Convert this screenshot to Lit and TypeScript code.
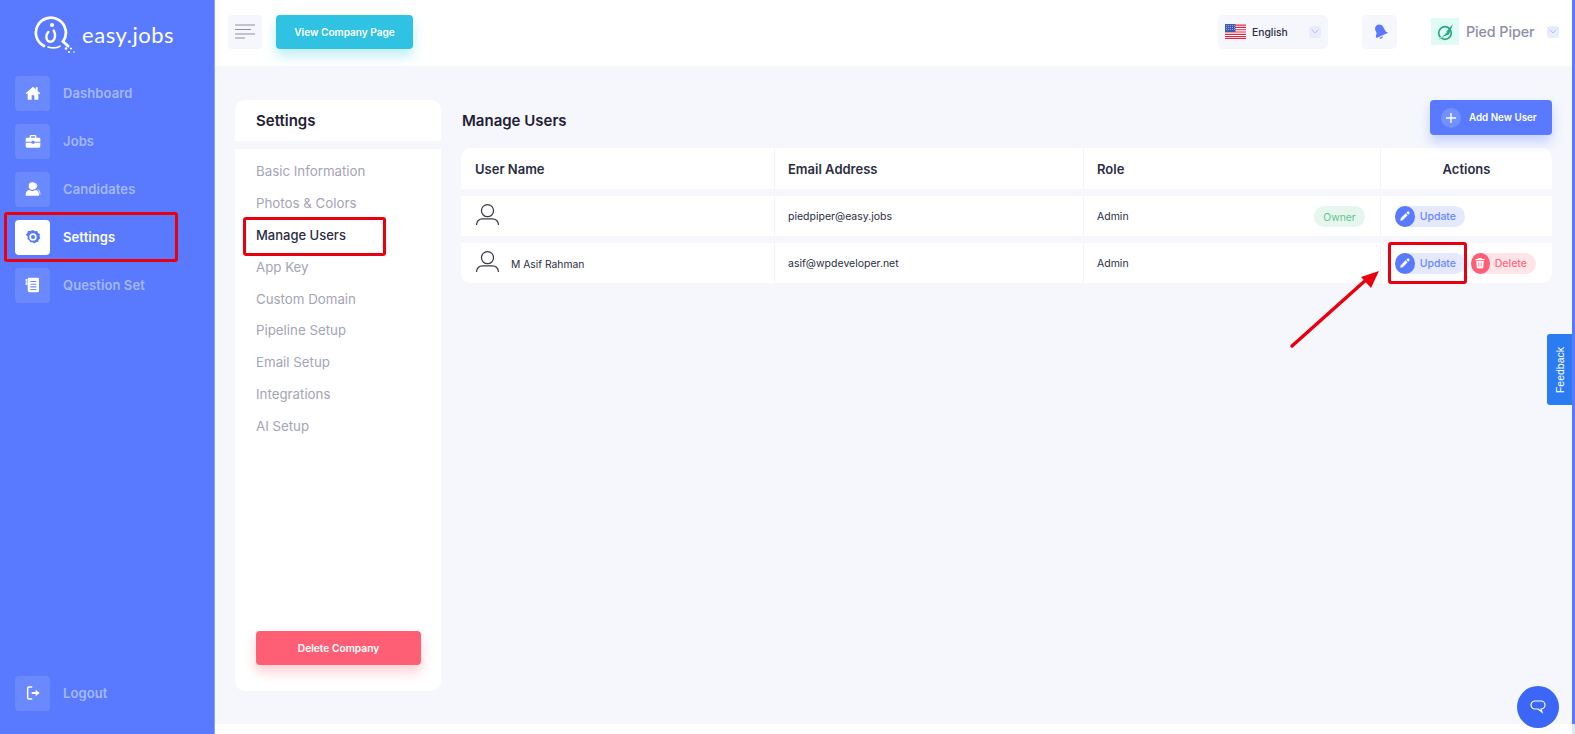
import { LitElement, html, css, svg } from "lit";
import { customElement } from "lit/decorators.js";

const ic = (p: unknown, size = 16, vb = "0 0 24 24") =>
  html`<svg width=${size} height=${size} viewBox=${vb} fill="currentColor">${p}</svg>`;

const home = svg`<path d="M12 2.500 1 12.500l1.300 1.400L4 12.400V22h6v-6.500h4V22h6v-9.600l1.700 1.500 1.300-1.400-4-3.600V3.500h-3v2.700z"/>`;
const brief = svg`<path d="M9 3h6a2 2 0 0 1 2 2v2h4a2 2 0 0 1 2 2v4H14v-1.200h-4V13H1V9a2 2 0 0 1 2-2h4V5a2 2 0 0 1 2-2zm0 2v2h6V5zM1 14.600h9V16h4v-1.400h9V20a2 2 0 0 1-2 2H3a2 2 0 0 1-2-2z"/>`;
const user = svg`<circle cx="11" cy="7.500" r="5.500"/><path d="M15 2.500a5.500 5.500 0 0 1 3 7 5 5 0 0 1-2.500 2.800c-.8-.2-.6-1-.2-1.500a6 6 0 0 0 .7-6c-.3-.8-.8-1.500-1-2.300z" opacity=".8"/><path d="M1 22v-2.500c0-3.500 3-6 6-6 1 1 2.400 1.500 4 1.500s3-.5 4-1.500c3 0 6 2.500 6 6V22z"/><path d="M18 12.500c3 .5 5 3 5 6V21h-1c0-3.500-1.500-6-4-8.500z" opacity=".8"/>`;
const gear = svg`<path fill-rule="evenodd" d="M12 1.500l2.800 1.700 3.300-.2 1.400 3 2.900 1.600-.6 3.300 1.200 3.100-2.500 2.200-.8 3.200-3.300.4-2.600 2-2.800-1.800-3.300-.2-1.400-3-2.700-1.900.7-3.200L1 8.400l2.500-2.100.9-3.200 3.300-.2zM12 6.500a5.500 5.500 0 1 0 0 11 5.500 5.500 0 0 0 0-11zm0 2.500a3 3 0 1 1 0 6 3 3 0 0 1 0-6z"/>`;
const doc = svg`<path fill-rule="evenodd" d="M5 1h14a2 2 0 0 1 2 2v18a2 2 0 0 1-2 2H7a3 3 0 0 1-3-3V3zM8 6v1.600h9V6zm0 4v1.600h9V10zm0 4v1.600h9V14zm0 4v1.600h9V18z"/><path d="M1 3h2.500v4H1zm0 5h2.500v4H1z"/>`;
const logout = svg`<path d="M10 3H6a2 2 0 0 0-2 2v14a2 2 0 0 0 2 2h4" fill="none" stroke="currentColor" stroke-width="2.200" stroke-linecap="round"/><path d="M10 10.600h6V7l6 5-6 5v-3.600h-6z"/>`;
const pencil = svg`<path d="M16.500 3.500a2.500 2.500 0 0 1 3.500 0l.5.5a2.500 2.500 0 0 1 0 3.500l-1.800 1.800-4-4zM13.300 6.700l4 4L7.500 20.500 2.500 21.500l1-5z"/>`;
const trash = svg`<path fill-rule="evenodd" d="M9 2h6l1 2h5v2.500H3V4h5zM4.500 8h15l-1 13a2 2 0 0 1-2 1.800h-9a2 2 0 0 1-2-1.800zM9 11v8h1.500v-8zm4.500 0v8H15v-8z"/>`;
const bell = svg`<path d="M7 3.500C9.500 1 14 1.500 16 4.500l2.800 5.500c.5 1.200 1.600 2 3.200 2.500l1 .6-15.500 7-.6-1c-.6-1.500-.5-2.800.2-4 .5-1.200.4-2.200-.3-3.500C5 9 4.800 5.500 7 3.500z"/><path d="M11 20l5-2.200c.3 2.200-2.800 4.500-5 2.200z"/>`;
const chev = html`<svg width="8" height="5" viewBox="0 0 8 5" fill="none" stroke="#b4bff5" stroke-width="1"><path d="M.5.5 4 4 7.500.5"/></svg>`;
const person = html`<svg class="person" width="25" height="23" viewBox="0 0 26 24" fill="none" stroke="#3b3b46" stroke-width="1.300"><circle cx="13" cy="8" r="6.300"/><path d="M1.500 23c.3-4.500 3.300-6.500 6.500-6.500h10c3.200 0 6.200 2 6.500 6.500"/></svg>`;

const navItems = [
  ["Dashboard", home],
  ["Jobs", brief],
  ["Candidates", user],
  ["Settings", gear],
  ["Question Set", doc],
];
const sideItems = ["Basic Information", "Photos & Colors", "Manage Users", "App Key", "Custom Domain", "Pipeline Setup", "Email Setup", "Integrations", "AI Setup"];

@customElement("app-root")
export class AppRoot extends LitElement {
  static styles = css`
    :host { display: block; position: relative; width: 1575px; height: 734px; overflow: hidden; font-family: Inter, "Liberation Sans", sans-serif; background: #fff; color: #2b2d42; }
    * { box-sizing: border-box; }
    .shell { display: flex; height: 734px; }
    .sidebar { width: 215px; flex: none; background: #597aff; border-right: 1px solid #8ea5ff; display: flex; flex-direction: column; padding: 0 15px 23px; }
    .logo { height: 75.500px; display: flex; align-items: flex-start; padding: 16px 0 0 19px; color: #fff; }
    .logo svg { flex: none; }
    .logo span { font: 400 22px/1 Lato, sans-serif; letter-spacing: .55px; margin: 8px 0 0 4px; }
    .nav { display: flex; flex-direction: column; gap: 13px; flex: 1; }
    .item { display: flex; align-items: center; gap: 13px; height: 35px; font-size: 13px; font-weight: 600; color: #a6b8ff; letter-spacing: .1px; }
    .item .box { width: 35px; height: 35px; border-radius: 4px; background: #6b89ff; color: #fff; display: flex; align-items: center; justify-content: center; flex: none; }
    .item.on { color: #fff; }
    .item.on .box { background: #fff; color: #597aff; }
    .logoutrow { margin-bottom: .500px; }
    .content { flex: 1; display: flex; flex-direction: column; min-width: 0; }
    .strip { width: 3px; flex: none; display: flex; flex-direction: column; }
    .strip i { display: block; height: 724px; background: #597aff; }
    .strip b { display: block; flex: 1; background: #dfe5fb; }
    header { height: 66px; flex: none; display: flex; align-items: center; padding: 0 13px 3px 13px; background: #fff; }
    .burger { width: 34px; height: 34px; background: #f5f7fd; border-radius: 4px; display: flex; align-items: center; justify-content: center; }
    .view { margin-left: 14px; width: 137px; height: 34px; background: #2fc2e2; color: #fff; border-radius: 4px; font-size: 10.100px; font-weight: 600; display: flex; align-items: center; justify-content: center; box-shadow: 0 7px 12px rgba(47,194,226,.3); }
    .lang { margin-left: auto; width: 110px; height: 34px; border-radius: 5px; background: #f5f7fd; display: flex; align-items: center; padding: 0 7px; font-size: 10.300px; font-weight: 500; }
    .lang .txt { margin-left: 6px; flex: 1; }
    .cv { width: 12px; height: 12px; border-radius: 3px; background: #e8ecfd; display: flex; align-items: center; justify-content: center; flex: none; }
    .bell { margin-left: 34px; width: 35px; height: 34px; border-radius: 5px; background: #f5f7fd; color: #597aff; display: flex; align-items: center; justify-content: center; }
    .co { margin-left: 34px; width: 28px; height: 27px; background: #e0fbf4; display: flex; align-items: center; justify-content: center; }
    .coname { margin-left: 7px; font-size: 14.300px; font-weight: 500; color: #8d90a3; width: 81px; letter-spacing: -.1px; }
    main { flex: 1; background: #f5f7fd; display: flex; gap: 20px; padding: 34px 20px 33px; min-height: 0; }
    aside { width: 206px; flex: none; display: flex; flex-direction: column; gap: 8px; }
    .stitle { height: 41px; background: #fff; border-radius: 10px 10px 0 0; padding-left: 21px; display: flex; align-items: center; font-size: 15px; font-weight: 600; color: #1f2133; }
    .snav { flex: 1; background: #fff; border-radius: 0 0 10px 10px; padding: 6px 20px 26px 21px; display: flex; flex-direction: column; }
    .snav a { height: 31.900px; display: flex; align-items: center; font-size: 13.300px; color: #a3a5b5; }
    .snav a.on { color: #2b2d42; font-weight: 500; font-size: 13px; }
    .del { margin-top: auto; height: 34px; border-radius: 4px; background: #ff5f74; color: #fff; display: flex; align-items: center; justify-content: center; font-size: 10.200px; font-weight: 600; box-shadow: 0 7px 12px rgba(255,95,116,.3); }
    .panel { flex: 1; min-width: 0; }
    .ptop { display: flex; align-items: center; justify-content: space-between; height: 35px; margin-bottom: 13px; }
    .ptop h1 { margin: 6px 0 0 1px; font-size: 15px; font-weight: 600; color: #1f2133; }
    .add { width: 122px; height: 35px; border-radius: 4px; background: #597aff; color: #fff; display: flex; align-items: center; padding-left: 11px; gap: 8px; font-size: 9.800px; font-weight: 600; box-shadow: 0 7px 12px rgba(89,122,255,.3); }
    .add i { width: 20px; height: 20px; border-radius: 50%; background: #7390ff; display: flex; align-items: center; justify-content: center; font-style: normal; }
    .row { display: grid; grid-template-columns: 314px 309px 297px 1fr; height: 40px; background: #fff; margin-bottom: 7px; font-size: 10.500px; color: #2b2d42; }
    .row.head { height: 41px; font-size: 13px; font-weight: 600; border-radius: 10px 10px 0 0; }
    .row.last { border-radius: 0 0 10px 10px; }
    .cell { border-right: 1px solid #f1f3fa; display: flex; align-items: center; padding-left: 13px; position: relative; }
    .cell:first-child { padding-left: 14px; }
    .cell:last-child { border-right: 0; padding-left: 14px; gap: 6px; }
    .head .cell:last-child { justify-content: center; padding: 0; }
    .person { margin-bottom: 3px; flex: none; }
    .uname { margin-left: 11px; font-size: 10.300px; margin-top: 1px; }
    .owner { position: absolute; right: 15px; top: 10px; width: 51px; height: 21px; border-radius: 11px; background: #e6f6ee; color: #63c48c; font-size: 10.300px; display: flex; align-items: center; justify-content: center; }
    .pill { height: 21px; border-radius: 11px; display: flex; align-items: center; gap: 5px; padding-right: 9px; font-size: 10.500px; font-weight: 500; }
    .pill i { width: 21px; height: 21px; border-radius: 50%; display: flex; align-items: center; justify-content: center; color: #fff; }
    .up { background: #e4e9fe; color: #6a87ff; width: 70px; }
    .up i { background: #597aff; }
    .dl { background: #ffe5e8; color: #ff6a7e; width: 65px; }
    .dl i { background: #ff5f74; }
    .red { position: absolute; border: 3px solid #e8000f; border-radius: 3px; pointer-events: none; }
    .r1 { left: 4px; top: 212px; width: 174px; height: 50px; }
    .r2 { left: 243px; top: 217px; width: 143px; height: 39px; }
    .r3 { left: 1388px; top: 242px; width: 79px; height: 42px; }
    .arrow { position: absolute; left: 1285px; top: 265px; }
    .fb { position: absolute; left: 1547px; top: 334px; width: 25px; height: 71px; background: #2b7cf0; border-radius: 3px 0 0 3px; color: #fff; display: flex; align-items: center; justify-content: center; padding-left: 2px; }
    .fb span { transform: rotate(-90deg); font: 400 10.500px "Liberation Sans", sans-serif; white-space: nowrap; }
    .chat { position: absolute; left: 1517px; top: 686px; width: 42px; height: 42px; border-radius: 50%; background: #3b66f6; display: flex; align-items: center; justify-content: center; }
  `;

  render() {
    return html`
      <div class="shell">
        <div class="sidebar">
          <div class="logo">
            <svg width="44" height="40" viewBox="0 0 44 40" fill="none" stroke="#fff" stroke-linecap="round">
              <path d="M10 30A15 15 0 1 1 29 25.500" stroke-width="2.700"/>
              <path d="M19.700 14.500c1.500 3 1.800 6 .6 8.500-1.200 2.700-5 3.600-6.800 1.500-1.800-2-1.500-6 .8-8.500" stroke-width="2.400"/>
              <circle cx="18" cy="9" r="2.100" fill="#fff" stroke="none"/>
              <path d="M29 25.500l5 4.500" stroke-width="3"/>
              <path d="M14 31c4 1.200 9 1 12-.8" stroke-width="1.600"/>
              <circle cx="32" cy="32.500" r="1.300" fill="#fff" stroke="none"/>
              <circle cx="37" cy="32.500" r="1.100" fill="#fff" stroke="none"/>
              <circle cx="35" cy="36" r="1.100" fill="#fff" stroke="none"/>
              <circle cx="40" cy="36" r=".8" fill="#fff" stroke="none"/>
            </svg>
            <span>easy.jobs</span>
          </div>
          <div class="nav">
            ${navItems.map(([n, i]) => html`<div class="item ${n === "Settings" ? "on" : ""}"><div class="box">${ic(i, 16)}</div>${n}</div>`)}
          </div>
          <div class="item logoutrow"><div class="box">${ic(logout, 16)}</div>Logout</div>
        </div>
        <div class="content">
          <header>
            <div class="burger">
              <svg width="20" height="15" viewBox="0 0 20 15" stroke="#8e90a0" stroke-width="1.200"><path d="M0 1h20M0 5.500h16M0 10h20M0 14h10"/></svg>
            </div>
            <div class="view">View Company Page</div>
            <div class="lang">
              <svg width="21" height="15" viewBox="0 0 21 15">
                <rect width="21" height="15" fill="#fff"/>
                <path d="M0 1.100h21M0 3.400h21M0 5.700h21M0 8h21M0 10.300h21M0 12.600h21M0 14.500h21" stroke="#dc2c45" stroke-width="1.150"/>
                <rect width="10.500" height="8" fill="#3c5bb0"/>
                <path d="M1 1.500h9M1 3.500h9M1 5.500h9" stroke="#a9b8e6" stroke-width=".8" stroke-dasharray="1 1"/>
              </svg>
              <span class="txt">English</span>
              <span class="cv">${chev}</span>
            </div>
            <div class="bell">${ic(bell, 18)}</div>
            <div class="co">
              <svg width="20" height="20" viewBox="0 0 20 20" fill="none" stroke="#2aa884" stroke-width="1.700"><circle cx="10" cy="11" r="6.300"/><path d="M3.300 18.500 18 2 14 12.500 8.500 14.500z" fill="#2aa884" stroke="none"/><path d="M9 10.500 3.300 18.500 12.800 9.500z" fill="#e0fbf4" stroke="none"/></svg>
            </div>
            <span class="coname">Pied Piper</span>
            <span class="cv">${chev}</span>
          </header>
          <main>
            <aside>
              <div class="stitle">Settings</div>
              <div class="snav">
                ${sideItems.map((s) => html`<a class="${s === "Manage Users" ? "on" : ""}">${s}</a>`)}
                <div class="del">Delete Company</div>
              </div>
            </aside>
            <div class="panel">
              <div class="ptop">
                <h1>Manage Users</h1>
                <div class="add"><i><svg width="10" height="10" viewBox="0 0 10 10" stroke="#fff" stroke-width="1.400"><path d="M5 0v10M0 5h10"/></svg></i>Add New User</div>
              </div>
              <div class="row head">
                <div class="cell">User Name</div><div class="cell">Email Address</div><div class="cell">Role</div><div class="cell">Actions</div>
              </div>
              <div class="row">
                <div class="cell">${person}</div>
                <div class="cell">piedpiper@easy.jobs</div>
                <div class="cell">Admin<span class="owner">Owner</span></div>
                <div class="cell"><div class="pill up"><i>${ic(pencil, 12)}</i>Update</div></div>
              </div>
              <div class="row last">
                <div class="cell">${person}<span class="uname">M Asif Rahman</span></div>
                <div class="cell">asif@wpdeveloper.net</div>
                <div class="cell">Admin</div>
                <div class="cell"><div class="pill up"><i>${ic(pencil, 12)}</i>Update</div><div class="pill dl"><i>${ic(trash, 12)}</i>Delete</div></div>
              </div>
            </div>
          </main>
          <div style="height:10px;flex:none"></div>
        </div>
        <div class="strip"><i></i><b></b></div>
      </div>
      <div class="red r1"></div>
      <div class="red r2"></div>
      <div class="red r3"></div>
      <svg class="arrow" width="100" height="90" viewBox="0 0 100 90" fill="none">
        <path d="M7 81 82 14" stroke="#e8000f" stroke-width="3.400" stroke-linecap="round"/>
        <path d="M94 6 76 12l10 11z" fill="#e8000f"/>
      </svg>
      <div class="fb"><span>Feedback</span></div>
      <div class="chat">
        <svg width="16" height="15" viewBox="0 0 16 15" fill="none" stroke="#fff" stroke-width="1.200"><path d="M5 1h6a4 4 0 0 1 4 4 4 4 0 0 1-4 4l1 3-4-3H5a4 4 0 0 1-4-4 4 4 0 0 1 4-4z"/></svg>
      </div>
    `;
  }
}
